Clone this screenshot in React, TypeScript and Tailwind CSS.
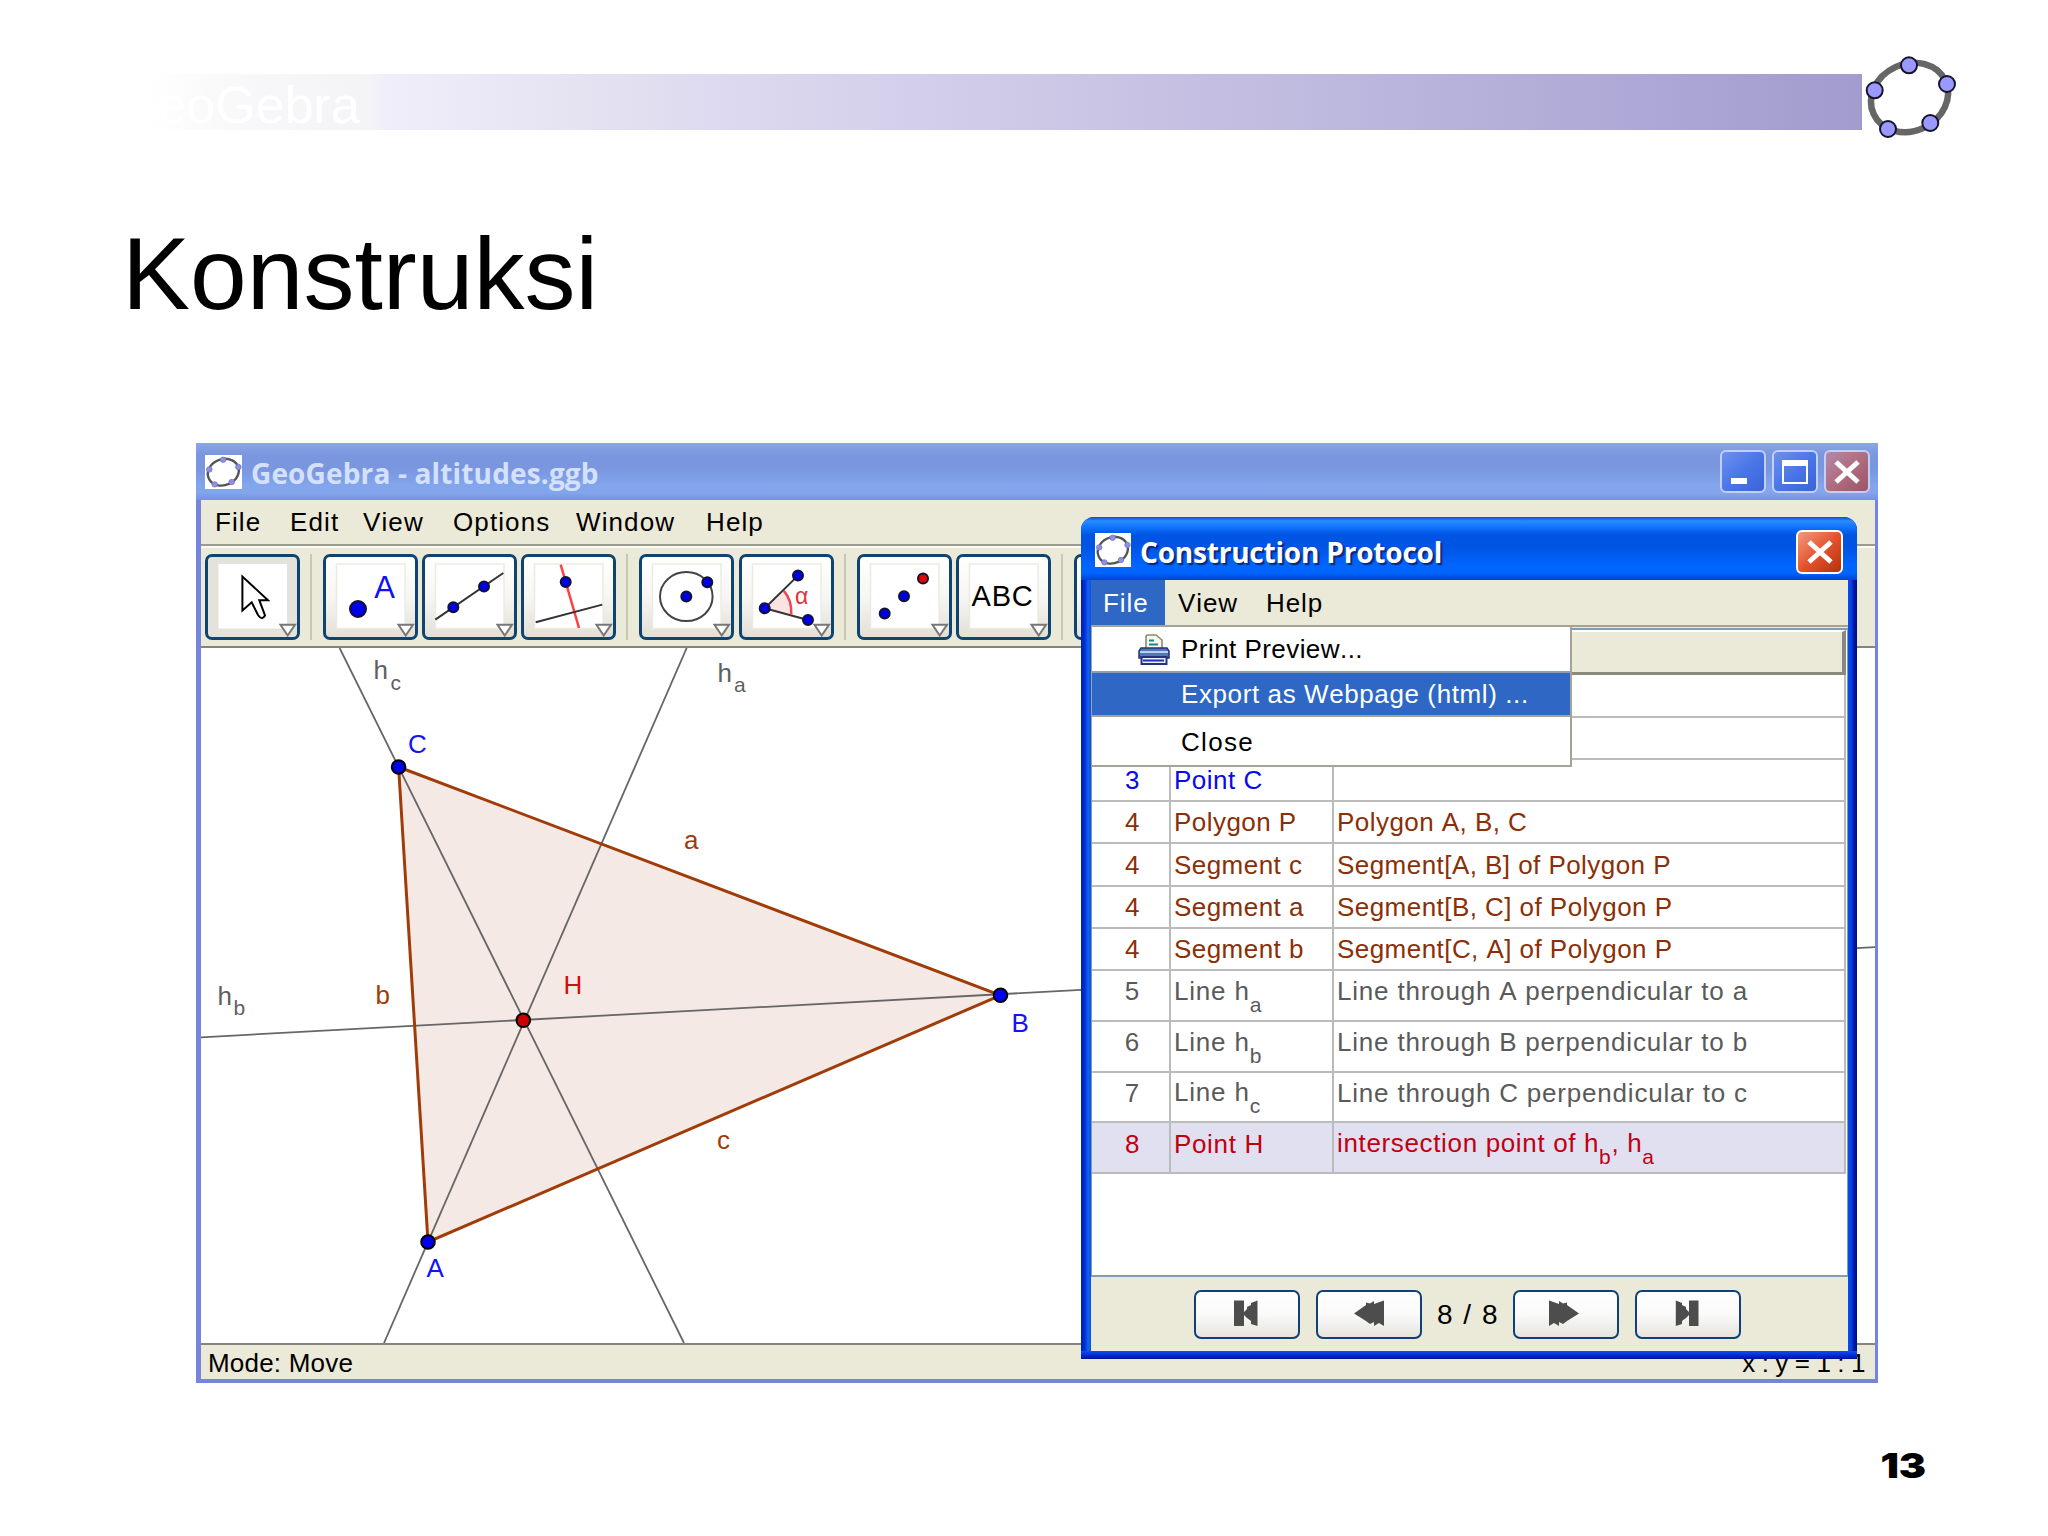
import type { ReactNode } from "react";

const MENU = [
  { label: "File", width: "w-[75px]" },
  { label: "Edit", width: "w-[73px]" },
  { label: "View", width: "w-[90px]" },
  { label: "Options", width: "w-[123px]" },
  { label: "Window", width: "w-[130px]" },
  { label: "Help", width: "w-[80px]" },
];

function Sub({ children }: { children: ReactNode }) {
  return <sub className="static align-[-12px] text-[21px] leading-[0px]">{children}</sub>;
}

type Row = { n: string; name: ReactNode; text: ReactNode; height: string; color: string };

const BROWN = "text-[#8a2f06] tracking-[0.45px]";
const GRAY = "text-[#5a5a5a] tracking-[0.8px] pb-[9px]";
const BLUE = "text-[#0a0ae6] tracking-[0.5px]";

const ROWS: Row[] = [
  // rows 1 and 2 sit behind the open menu
  { n: "", name: "", text: "", height: "h-[43px]", color: BLUE },
  { n: "", name: "", text: "", height: "h-[42px]", color: BLUE },
  { n: "3", name: "Point C", text: "", height: "h-[42px]", color: BLUE },
  { n: "4", name: "Polygon P", text: "Polygon A, B, C", height: "h-[42px]", color: BROWN },
  { n: "4", name: "Segment c", text: "Segment[A, B] of Polygon P", height: "h-[43px]", color: BROWN },
  { n: "4", name: "Segment a", text: "Segment[B, C] of Polygon P", height: "h-[42px]", color: BROWN },
  { n: "4", name: "Segment b", text: "Segment[C, A] of Polygon P", height: "h-[42px]", color: BROWN },
  { n: "5", name: <>Line h<Sub>a</Sub></>, text: "Line through A perpendicular to a", height: "h-[51px]", color: GRAY },
  { n: "6", name: <>Line h<Sub>b</Sub></>, text: "Line through B perpendicular to b", height: "h-[51px]", color: GRAY },
  { n: "7", name: <>Line h<Sub>c</Sub></>, text: "Line through C perpendicular to c", height: "h-[50px]", color: GRAY },
  {
    n: "8",
    name: "Point H",
    text: <>intersection point of h<Sub>b</Sub>, h<Sub>a</Sub></>,
    height: "h-[51px]",
    color: "text-[#c00010] tracking-[0.65px] pb-[8px] bg-[#e1e0f1]",
  },
];

const LOGO_POINTS = [
  [40, 12.3],
  [78, 31],
  [61.3, 70],
  [19, 76],
  [5.7, 37.3],
];

function GeoGebraLogo({ className, bold = false }: { className: string; bold?: boolean }) {
  return (
    <svg viewBox="-5 0 92 88" preserveAspectRatio="none" className={className} aria-hidden>
      <ellipse
        cx="40.5"
        cy="44.5"
        rx="39.5"
        ry="33.5"
        transform="rotate(-25 40.5 44.5)"
        fill="none"
        stroke={bold ? "#666" : "#555"}
        strokeWidth={bold ? 6.5 : 6}
      />
      {LOGO_POINTS.map(([x, y]) => (
        <circle
          key={x}
          cx={x}
          cy={y}
          r={bold ? 8 : 7}
          fill={bold ? "#9999ff" : "#8f8fe8"}
          stroke={bold ? "#15152a" : "#7777bb"}
          strokeWidth="2"
        />
      ))}
    </svg>
  );
}

function Dot({ x, y, r = 5, color = "#0000e6" }: { x: number; y: number; r?: number; color?: string }) {
  return <circle cx={x} cy={y} r={r} fill={color} stroke="#111133" strokeWidth="2" />;
}

function ToolButton({ children, pressed = false }: { children?: ReactNode; pressed?: boolean }) {
  return (
    <div
      className={[
        "h-[86px] w-[95px] shrink-0 overflow-hidden rounded-[7px] border-[3px] border-[#0f4470]",
        pressed ? "bg-[#e3e2db]" : "bg-linear-to-b from-white via-[#f7f6f2] to-[#e2dfd6]",
      ].join(" ")}
    >
      <svg viewBox="3 3 89 80" className="h-20 w-[89px]" aria-hidden>
        <rect
          x="13.5"
          y="10"
          width="68.5"
          height="64.5"
          fill="#fff"
          stroke={pressed ? "none" : "#ecebe2"}
          strokeWidth="1.5"
        />
        {children}
        <path d="M75.5 70.8H90L82.7 81.5Z" fill="#fff" stroke="#777" strokeWidth="2" />
      </svg>
    </div>
  );
}

function Separator() {
  return <div className="mr-[11px] ml-[10px] h-[86px] w-[2px] shrink-0 bg-[#c9c6b6]" />;
}

function Toolbar() {
  return (
    <div className="flex h-[102px] items-start overflow-hidden border-t-2 border-b-2 border-t-[#fbfaf4] border-b-[#85857c] bg-[#ebe9d8] pt-[6px] pl-[4px]">
      <ToolButton pressed>
        <path
          d="M37.4 22.5V56.5L46.7 48.3L53 61Q57 67 60 61.5L54.3 46.2H63Z"
          fill="#fff"
          stroke="#000"
          strokeWidth="2"
        />
      </ToolButton>
      <Separator />
      <div className="flex gap-[4.2px]">
        <ToolButton>
          <text x="51.3" y="44" fontSize="31" fill="#1010f0">A</text>
          <Dot x={35} y={55} r={8} />
        </ToolButton>
        <ToolButton>
          <path d="M13.3 65.6L81.3 19" stroke="#333" strokeWidth="2" />
          <Dot x={62} y={32.6} />
          <Dot x={31.3} y={53.3} />
        </ToolButton>
        <ToolButton>
          <path d="M39.7 10.6L58 74" stroke="#ff4040" strokeWidth="2.5" />
          <path d="M14.7 68.3L81.3 50.6" stroke="#333" strokeWidth="2" />
          <Dot x={44.7} y={28} />
        </ToolButton>
      </div>
      <Separator />
      <div className="flex gap-[4.2px]">
        <ToolButton>
          <ellipse cx="47.3" cy="42.6" rx="26.3" ry="24.5" fill="none" stroke="#444" strokeWidth="2" />
          <Dot x={47.3} y={42.6} />
          <Dot x={68.3} y={28.3} />
        </ToolButton>
        <ToolButton>
          <path d="M25.7 54.3L44.7 36.6Q53 46 52.3 60.6Z" fill="#fbe3e3" />
          <path d="M59 21.6L25.7 54.3L69 66" fill="none" stroke="#333" strokeWidth="2" />
          <path d="M44.7 36.6Q53 46 52.3 60.6" fill="none" stroke="#e84a55" strokeWidth="2.5" />
          <text x="56" y="49.5" fontSize="23" fill="#e0323c">α</text>
          <Dot x={25.7} y={54.3} />
          <Dot x={59} y={21.6} />
          <Dot x={69} y={66} />
        </ToolButton>
      </div>
      <Separator />
      <div className="flex gap-[4.2px]">
        <ToolButton>
          <Dot x={66} y={24.6} color="#e60000" />
          <Dot x={47} y={42.3} />
          <Dot x={27.7} y={59.6} />
        </ToolButton>
        <ToolButton>
          <text x="15.5" y="51.5" fontSize="29" letterSpacing=".8">ABC</text>
        </ToolButton>
      </div>
      <Separator />
      <ToolButton />
    </div>
  );
}

/* The drawing pad, clipped to the window's inner width */
function Construction() {
  return (
    <svg viewBox="201 648 1674 695" className="block h-[695px] w-full bg-white" fontSize="26">
      <path d="M398.6 767L1000.5 995.3L428 1242Z" fill="#f5e9e6" />
      <g stroke="#666" strokeWidth="1.8">
        <path d="M339.6 648L684 1343" />
        <path d="M686.7 648L384 1343" />
        <path d="M201 1037.3L1876 947" />
      </g>
      <path d="M398.6 767L1000.5 995.3L428 1242Z" fill="none" stroke="#a03c08" strokeWidth="3" />
      <g stroke="#000" strokeWidth="2">
        <circle cx="398.6" cy="767" r="6.8" fill="#0000ee" />
        <circle cx="1000.5" cy="995.3" r="6.8" fill="#0000ee" />
        <circle cx="428" cy="1242" r="6.8" fill="#0000ee" />
        <circle cx="523.3" cy="1020.3" r="6.8" fill="#cc0000" />
      </g>
      <g fill="#606060">
        <text x="373.5" y="679">h</text>
        <text x="390.5" y="689.5" fontSize="21">c</text>
        <text x="717.5" y="681.5">h</text>
        <text x="734" y="692" fontSize="21">a</text>
        <text x="217.5" y="1004.5">h</text>
        <text x="233.5" y="1015" fontSize="21">b</text>
      </g>
      <g fill="#1414f0">
        <text x="408" y="753">C</text>
        <text x="1011.5" y="1032">B</text>
        <text x="426.5" y="1276.5">A</text>
      </g>
      <g fill="#a03c08">
        <text x="684" y="848.5">a</text>
        <text x="375.5" y="1004">b</text>
        <text x="717" y="1148.5">c</text>
      </g>
      <text x="563.5" y="994" fill="#d01010">H</text>
    </svg>
  );
}

function Cross() {
  return (
    <svg viewBox="0 0 26 24" className="h-6 w-[26px]" stroke="#fff" strokeWidth="5" aria-hidden>
      <path d="M2 2L24 22M24 2L2 22" />
    </svg>
  );
}

function PrinterIcon() {
  return (
    <svg viewBox="0 0 32 31" className="h-[31px] w-8" aria-hidden>
      <path d="M8 15V3Q8 1 10 1H18L24 6V15Z" fill="#f7f7e8" stroke="#8a8a78" strokeWidth="1.6" />
      <path d="M11 6.5H16M11 10.5H20" stroke="#178a8a" strokeWidth="1.8" />
      <path d="M3 14H29L31 17V24H1V17Z" fill="#5577b5" stroke="#26307c" strokeWidth="1.5" />
      <path d="M2 18H30" stroke="#b9d2f0" strokeWidth="2" />
      <path d="M3.5 23H28.5V30H3.5Z" fill="#e8eefa" stroke="#26307c" strokeWidth="2" />
      <path d="M5 26.5H26" stroke="#2330b0" strokeWidth="1.8" />
    </svg>
  );
}

function NavButton({ d }: { d: string }) {
  return (
    <div className="h-[49px] w-[106px] rounded-[7px] border-[2.5px] border-[#10407a] bg-linear-to-b from-white via-[#fafafa] to-[#e6e4dc]">
      <svg viewBox="2 2 102 45" className="h-full w-full" fill="#4d4d4d" aria-hidden>
        <path d={d} />
      </svg>
    </div>
  );
}

function FileDropdown() {
  return (
    <div className="absolute top-[45px] left-0 w-[481px] border-2 border-l border-[#a5a398] bg-white">
      <div className="flex h-[44px] items-center pl-[46px]">
        <PrinterIcon />
        <span className="pl-[11px] tracking-[0.45px] whitespace-pre">Print Preview...</span>
      </div>
      <div className="flex h-[46px] items-center border-t-2 border-b-2 border-t-[#8f9db5] border-b-[#a5a398] bg-[#2f68c4] pl-[89px] tracking-[0.6px] whitespace-pre text-white">
        Export as Webpage (html) ...
      </div>
      <div className="flex h-[48px] items-center pt-px pl-[89px] tracking-[1.3px]">Close</div>
    </div>
  );
}

function ProtocolTable() {
  return (
    <div className="mt-px flex h-[649px] flex-col border-2 border-r border-l border-[#7f9db9] bg-white">
      <div className="h-[45px] w-[754px] shrink-0 border-t-2 border-r-[4px] border-b-[3px] border-t-white border-r-[#8b897c] border-b-[#8b897c] bg-[#ebe9d8]" />
      {ROWS.map((row, i) => (
        <div
          key={i}
          className={`grid w-[754px] shrink-0 grid-cols-[79px_163px_1fr] border-b-2 border-[#bbb] ${row.height}`}
        >
          <div className={`flex items-center justify-center border-r-2 border-[#bbb] pl-[4px] ${row.color}`}>
            {row.n}
          </div>
          <div className={`flex items-center border-r-2 border-[#bbb] pl-[3px] ${row.color}`}>
            <span className="whitespace-pre">{row.name}</span>
          </div>
          <div className={`flex items-center border-r-2 border-[#bbb] pl-[3px] ${row.color}`}>
            <span className="whitespace-pre">{row.text}</span>
          </div>
        </div>
      ))}
    </div>
  );
}

function ConstructionProtocol() {
  return (
    <div className="absolute top-[74px] left-[880px] flex h-[842px] w-[776px] flex-col overflow-hidden rounded-t-[13px] bg-[linear-gradient(90deg,#0020b0_0,#0030d8_4px,#1264ee_7px,#0a50e0_10px,#0a50e0_766px,#0048e8_770px,#0018a8_773px,#001080_776px)]">
      <div className="flex h-[63px] shrink-0 items-center bg-[linear-gradient(180deg,#0a50c8_0,#2a8cff_4px,#1478ff_9px,#0054e3_18px,#0054e3_30px,#0064ff_48px,#0064ff_56px,#0044d0_63px)] pt-[3px] pr-[14px] pl-[14px]">
        <GeoGebraLogo className="h-[34px] w-9 bg-white" />
        <span className="flex-1 pt-[3px] pl-[9px] font-['Open_Sans',sans-serif] text-[28px] font-bold tracking-[-0.2px] whitespace-pre text-white [text-shadow:2px_2px_1px_#10257e]">
          Construction Protocol
        </span>
        <div className="mt-[4px] flex h-[44px] w-[47px] items-center justify-center rounded-[6px] border-[2.5px] border-white bg-linear-to-br from-[#f09a80] via-[#e4532c] to-[#b5300c]">
          <Cross />
        </div>
      </div>
      <div className="mr-[9px] ml-[10px] flex h-[771px] flex-col bg-[#ebe9d8]">
        <div className="relative z-10 flex h-[47px] shrink-0 items-center border-b-2 border-[#a5a398] tracking-[0.9px]">
          <div className="flex h-full w-[74px] items-center bg-[#2f68c4] pl-[12px] text-white">File</div>
          <div className="w-[89px] pl-[13px]">View</div>
          <div className="pl-[12px]">Help</div>
          <FileDropdown />
        </div>
        <ProtocolTable />
        <div className="flex grow items-center justify-center pr-[5px]">
          <NavButton d="M40 10.5H50V22L53 19V17L57 15V13L63.5 10.5V36L57 34V31L53 28L50 25V36H40Z" />
          <div className="w-4" />
          <NavButton d="M38 23.5L50 15V12.5L54 13.5L58 11V14L68 10.5V36L63 33L58 36V32L54 34L50 31Z" />
          <div className="w-[91px] pt-[2px] pl-[2px] text-center text-[28px] tracking-[1.5px]">8 / 8</div>
          <NavButton d="M66 23.5L54 15V12.5L50 13.5L46 11V14L36 10.5V36L41 33L46 36V32L50 34L54 31Z" />
          <div className="w-4" />
          <NavButton d="M63.5 10.5H54V22L51 19V17L47 15V13L40.8 10.5V36L47 34V31L51 28L54 25V36H63.5Z" />
        </div>
      </div>
      {/* bottom frame */}
      <div className="grow bg-[linear-gradient(180deg,#1050e8_0,#0038e0_3px,#0020b8_6px,#001490_8px)]" />
    </div>
  );
}

function WindowButton({ children, close = false }: { children: ReactNode; close?: boolean }) {
  return (
    <div
      className={[
        "flex h-[43px] w-[46px] items-center justify-center rounded-[6px] border-2 border-[#c3d0f6]",
        close
          ? "bg-linear-to-br from-[#b28aa8] via-[#b06c80] to-[#9a5568]"
          : "bg-linear-to-br from-[#6e90ee] via-[#4a76e8] to-[#3a64d8]",
      ].join(" ")}
    >
      {children}
    </div>
  );
}

export default function App() {
  return (
    <div className="flex h-[1536px] w-[2048px] flex-col overflow-hidden bg-white font-['Liberation_Sans',Arial,sans-serif] text-[26px] leading-none text-black [font-kerning:none]">
      {/* Slide header */}
      <div className="flex h-[148px] shrink-0 items-start pt-[50px] pl-[117px]">
        <div className="mt-[24px] flex h-14 w-[1745px] items-center bg-[linear-gradient(90deg,#fff_0,#fefefe_50px,#fafafb_90px,#f7f7f9_150px,#f4f4f7_250px,#f0eefa_268px,#eae8f6_365px,#e4e2f1_480px,#dedaf0_590px,#a29ccf_100%)] pt-[6px] text-[52px] text-white">
          GeoGebra
        </div>
        <GeoGebraLogo bold className="mt-[3px] ml-[2px] h-[88px] w-[92px]" />
      </div>
      <h1 className="h-[295px] shrink-0 pt-[75px] pl-[122px] text-[102px] leading-none">Konstruksi</h1>

      {/* Main window */}
      <div className="relative ml-[196px] flex h-[940px] w-[1682px] shrink-0 flex-col border-r-[3px] border-b-4 border-l-[5px] border-[#7585dc] bg-[#ebe9d8]">
        <div className="-mr-[3px] -ml-[5px] flex h-[57px] shrink-0 items-center bg-[linear-gradient(180deg,#8aa8e4_0,#7a96df_12px,#7a96df_26px,#82a5ec_42px,#82a5ec_50px,#7890e0_57px)] pr-[8px] pl-[9px]">
          <GeoGebraLogo className="h-[34px] w-[37px] bg-white" />
          <span className="flex-1 pt-[2px] pl-[9px] font-['Open_Sans',sans-serif] text-[28px] font-bold tracking-[0.15px] whitespace-pre text-[#d5e1fb]">
            GeoGebra - altitudes.ggb
          </span>
          <div className="flex gap-[6px]">
            <WindowButton>
              <div className="mt-[19px] mr-[9px] h-[6px] w-4 bg-white" />
            </WindowButton>
            <WindowButton>
              <div className="h-6 w-[26px] border-2 border-t-[6px] border-white" />
            </WindowButton>
            <WindowButton close>
              <Cross />
            </WindowButton>
          </div>
        </div>
        <div className="flex h-[46px] shrink-0 items-center border-b-2 border-[#9c9b90] pl-[14px] tracking-[1.1px]">
          {MENU.map((item) => (
            <div key={item.label} className={item.width}>
              {item.label}
            </div>
          ))}
        </div>
        <Toolbar />
        <Construction />
        <div className="flex grow items-center justify-between border-t-2 border-[#85857c] pt-px pr-[10px] pl-[7px]">
          <span className="tracking-[0.2px]">Mode: Move</span>
          <span className="tracking-[-0.4px]">x : y = 1 : 1</span>
        </div>
        <ConstructionProtocol />
      </div>

      <div className="flex justify-end pt-[66px] pr-[122px] font-['Inter','Liberation_Sans',sans-serif] text-[34px] font-black">
        <span className="origin-right scale-x-[1.2]">13</span>
      </div>
    </div>
  );
}
